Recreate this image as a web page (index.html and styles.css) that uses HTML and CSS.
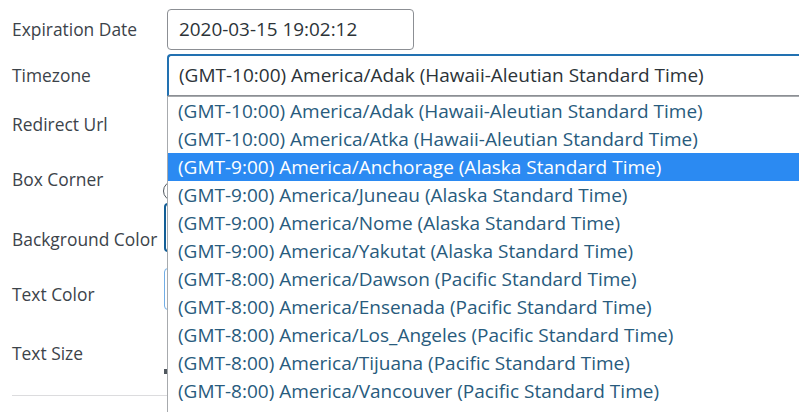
FILE: index.html
```html
<!DOCTYPE html>
<html lang="en">
  <head>
    <meta charset="UTF-8" />
    <title>Settings</title>
    <link rel="stylesheet" href="styles.css">
  </head>
  <body>
    <div class="form">
      <div class="row row-date">
        <label class="label">Expiration Date</label>
        <div class="field"><input class="text-input" type="text" value="2020-03-15 19:02:12" /></div>
      </div>
      <div class="row row-tz">
        <label class="label">Timezone</label>
        <div class="field">
          <div class="select">(GMT-10:00) America/Adak (Hawaii-Aleutian Standard Time)</div>
          <ul class="dropdown">
            <li>(GMT-10:00) America/Adak (Hawaii-Aleutian Standard Time)</li>
            <li>(GMT-10:00) America/Atka (Hawaii-Aleutian Standard Time)</li>
            <li class="active">(GMT-9:00) America/Anchorage (Alaska Standard Time)</li>
            <li>(GMT-9:00) America/Juneau (Alaska Standard Time)</li>
            <li>(GMT-9:00) America/Nome (Alaska Standard Time)</li>
            <li>(GMT-9:00) America/Yakutat (Alaska Standard Time)</li>
            <li>(GMT-8:00) America/Dawson (Pacific Standard Time)</li>
            <li>(GMT-8:00) America/Ensenada (Pacific Standard Time)</li>
            <li>(GMT-8:00) America/Los_Angeles (Pacific Standard Time)</li>
            <li>(GMT-8:00) America/Tijuana (Pacific Standard Time)</li>
            <li>(GMT-8:00) America/Vancouver (Pacific Standard Time)</li>
          </ul>
        </div>
      </div>
      <div class="row row-url">
        <label class="label">Redirect Url</label>
        <div class="field"><input class="text-input wide" type="text" /></div>
      </div>
      <div class="row row-corner">
        <label class="label">Box Corner</label>
        <div class="field"><span class="radio"></span></div>
      </div>
      <div class="row row-bg">
        <label class="label">Background Color</label>
        <div class="field"><span class="color-btn dark"></span></div>
      </div>
      <div class="row row-text">
        <label class="label">Text Color</label>
        <div class="field"><span class="color-btn light"></span></div>
      </div>
      <div class="row row-size">
        <label class="label">Text Size</label>
        <div class="field"><span class="mark"></span></div>
      </div>
      <hr class="sep" />
    </div>
  </body>
</html>
```

FILE: styles.css
```css
html,
body {
  height: 412px;
}

body {
  margin: 0;
  background: #fff;
  font-family: "Open Sans", "Noto Sans", sans-serif;
  color: #3c434a;
  overflow: hidden;
}

.form {
  padding: 4px 0 0 12px;
}

.row {
  display: grid;
  grid-template-columns: 155px 1fr;
  align-items: center;
}

.row-date { height: 50px; }
.row-tz { height: 44px; align-items: start; }
.row-url { height: 52px; }
.row-corner { height: 58px; }
.row-bg { height: 62px; }
.row-text { height: 48px; }
.row-size { height: 70px; }

.label {
  font-size: 17.4px;
  color: #3c434a;
  white-space: nowrap;
}

.row-tz .label {
  padding-top: 9px;
}

.field {
  position: relative;
}

.text-input {
  box-sizing: border-box;
  width: 247px;
  height: 41px;
  padding: 0 11px;
  border: 1px solid #8c8f94;
  border-radius: 4px;
  font-family: inherit;
  font-size: 18.9px;
  color: #2c3338;
  outline: none;
}

.text-input.wide {
  width: 500px;
}

.select {
  box-sizing: border-box;
  width: 660px;
  height: 42px;
  padding: 0 10px;
  border: 1px solid #8c8f94;
  border-top: 2px solid #2271b1;
  border-left: 2px solid #2271b1;
  border-radius: 4px 0 0 0;
  line-height: 39px;
  font-size: 19px;
  color: #2c3338;
  white-space: nowrap;
}

/* open list of the timezone select, cut off by the window */
.dropdown {
  position: absolute;
  top: 42px;
  left: 0;
  width: 660px;
  margin: 0;
  padding: 0 0 7px;
  list-style: none;
  background: #fff;
  border: 1px solid #a7aaad;
  border-bottom: 0;
  z-index: 2;
}

.dropdown li {
  height: 28px;
  padding-left: 10px;
  line-height: 28px;
  font-size: 19px;
  color: #285b7d;
  white-space: nowrap;
}

.dropdown li.active {
  background: #2b8af2;
  color: #fff;
}

.radio {
  display: block;
  margin: 24px 0 0 -4px;
  width: 18px;
  height: 18px;
  border: 1px solid #50575e;
  border-radius: 50%;
}

.color-btn {
  display: block;
  margin-left: -3px;
  width: 120px;
  border-radius: 4px;
}

.color-btn.dark {
  height: 45px;
  margin-top: -23px;
  border: 2px solid #135e96;
}

.color-btn.light {
  height: 40px;
  margin-top: -10px;
  border: 1px solid #72aee6;
}

.mark {
  display: block;
  margin: 36px 0 0 -3px;
  width: 3px;
  height: 5px;
  background: #50575e;
}

.sep {
  width: 155px;
  margin: 7px 0 0;
  border: 0;
  border-top: 1px solid #dcdcde;
}
```
